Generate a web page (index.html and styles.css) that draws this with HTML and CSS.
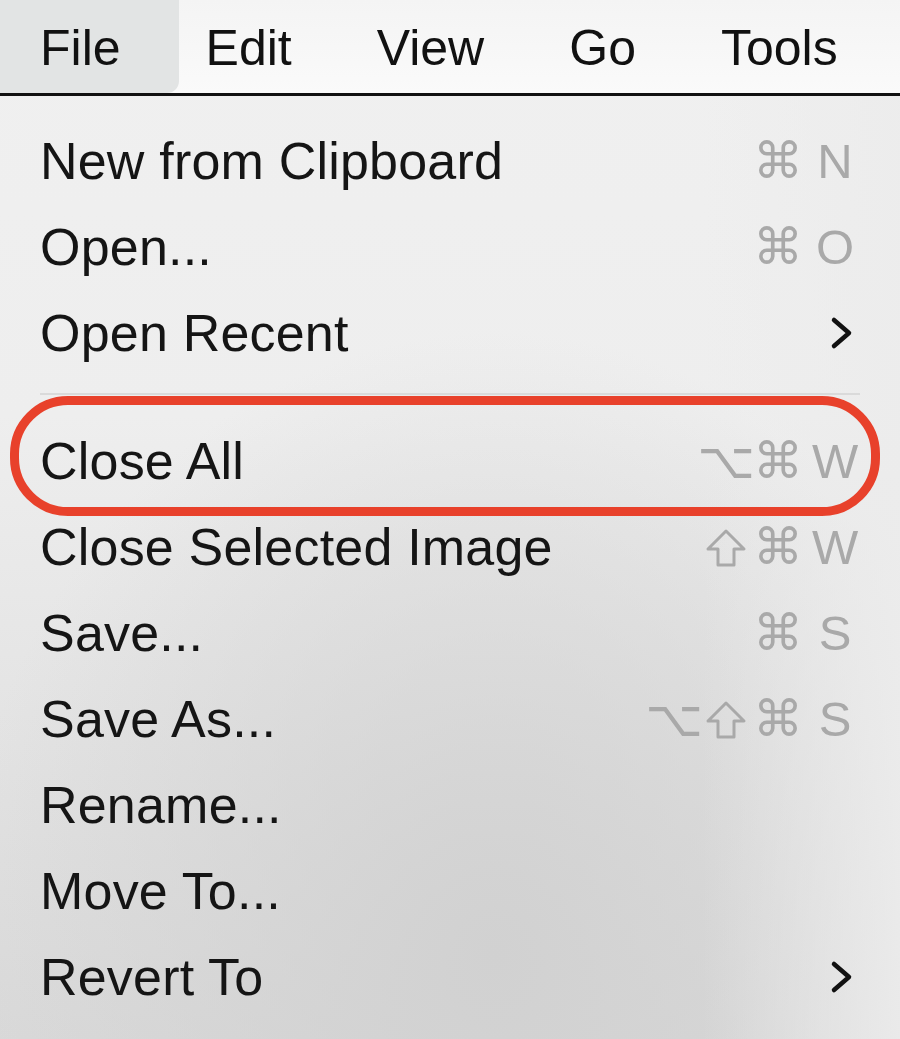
FILE: index.html
```html
<!DOCTYPE html>
<html>
<head>
<meta charset="utf-8">
<link rel="stylesheet" href="styles.css">
</head>
<body>
<div class="screen">
  <header class="menubar">
    <div class="mb-item active">File</div>
    <div class="mb-item">Edit</div>
    <div class="mb-item">View</div>
    <div class="mb-item">Go</div>
    <div class="mb-item">Tools</div>
  </header>
  <div class="menu">
    <div class="row"><span class="label">New from Clipboard</span><span class="sc"><span class="mods"><span class="mod">⌘</span></span><span class="key">N</span></span></div>
    <div class="row"><span class="label">Open...</span><span class="sc"><span class="mods"><span class="mod">⌘</span></span><span class="key">O</span></span></div>
    <div class="row"><span class="label">Open Recent</span><svg class="chev" viewBox="0 0 24 36" width="24" height="36"><path d="M5 5 L20 18 L5 31" fill="none" stroke="#111" stroke-width="4.5" stroke-linecap="round" stroke-linejoin="round"/></svg></div>
    <div class="sep"></div>
    <div class="row ring"><span class="label">Close All</span><span class="sc"><span class="mods"><span class="mod">⌥</span><span class="mod">⌘</span></span><span class="key">W</span></span></div>
    <div class="row"><span class="label">Close Selected Image</span><span class="sc"><span class="mods"><span class="mod"><svg class="shift" viewBox="0 0 42 40" width="42" height="40"><path d="M21 3 L39 21 L29 21 L29 37 L13 37 L13 21 L3 21 Z" fill="none" stroke="#a9a9a9" stroke-width="3" stroke-linejoin="round"/></svg></span><span class="mod">⌘</span></span><span class="key">W</span></span></div>
    <div class="row"><span class="label">Save...</span><span class="sc"><span class="mods"><span class="mod">⌘</span></span><span class="key">S</span></span></div>
    <div class="row"><span class="label">Save As...</span><span class="sc"><span class="mods"><span class="mod">⌥</span><span class="mod"><svg class="shift" viewBox="0 0 42 40" width="42" height="40"><path d="M21 3 L39 21 L29 21 L29 37 L13 37 L13 21 L3 21 Z" fill="none" stroke="#a9a9a9" stroke-width="3" stroke-linejoin="round"/></svg></span><span class="mod">⌘</span></span><span class="key">S</span></span></div>
    <div class="row"><span class="label">Rename...</span></div>
    <div class="row"><span class="label">Move To...</span></div>
    <div class="row"><span class="label">Revert To</span><svg class="chev" viewBox="0 0 24 36" width="24" height="36"><path d="M5 5 L20 18 L5 31" fill="none" stroke="#111" stroke-width="4.5" stroke-linecap="round" stroke-linejoin="round"/></svg></div>
  </div>
</div>
</body>
</html>
```

FILE: styles.css
```css
html, body {
  margin: 0;
  padding: 0;
}
body {
  width: 900px;
  height: 1039px;
  overflow: hidden;
  font-family: "Liberation Sans", Arial, sans-serif;
  color: #151515;
}
.screen {
  width: 900px;
  height: 1039px;
  display: flex;
  flex-direction: column;
  background:
    linear-gradient(to left, rgba(236,236,236,0.9) 0%, rgba(236,236,236,0) 22%),
    radial-gradient(ellipse 60% 60% at 55% 92%, #d1d1d1 0%, rgba(209,209,209,0) 100%),
    linear-gradient(to bottom, #f0f0f0 0%, #eeeeee 40%, #d9d9d9 100%);
}
.menubar {
  position: relative;
  z-index: 0;
  display: flex;
  gap: 85px;
  height: 91px;
  padding: 2px 0 0 40px;
  background: linear-gradient(to bottom, #f4f4f4, #fafafa);
  border-bottom: 3px solid #111;
  font-size: 50px;
  line-height: 93px;
  color: #111;
}
.mb-item {
  position: relative;
}
.mb-item.active::before {
  content: "";
  position: absolute;
  left: -40px;
  right: -58px;
  top: -2px;
  bottom: 0;
  background: #e2e4e4;
  border-radius: 0 0 12px 0;
  z-index: -1;
}
.menu {
  display: flex;
  flex-direction: column;
  padding-top: 22px;
}
.row {
  position: relative;
  display: flex;
  align-items: center;
  justify-content: space-between;
  height: 86px;
  padding: 0 47px 0 40px;
  font-size: 52px;
  line-height: 86px;
}
.label {
  white-space: nowrap;
  letter-spacing: 0.2px;
}
.sep {
  height: 42px;
  display: flex;
  align-items: center;
  padding: 0 40px 6px 40px;
  box-sizing: border-box;
}
.sep::before {
  content: "";
  flex: 1;
  height: 2px;
  background: #dadada;
}
.ring::after {
  content: "";
  position: absolute;
  left: 10px;
  right: 20px;
  top: -22px;
  bottom: -12px;
  border: 9px solid #e8412b;
  border-radius: 58px;
}
.sc {
  display: flex;
  align-items: center;
  color: #a9a9a9;
  margin-right: -5px;
}
.mods {
  display: flex;
  align-items: center;
  margin-right: 8px;
}
.mod {
  width: 52px;
  display: flex;
  justify-content: center;
  font-family: "DejaVu Sans", sans-serif;
  font-size: 50px;
}
.shift {
  display: block;
  margin-top: 2px;
}
.key {
  width: 46px;
  text-align: center;
  font-size: 49px;
}
.chev {
  display: block;
}
```
